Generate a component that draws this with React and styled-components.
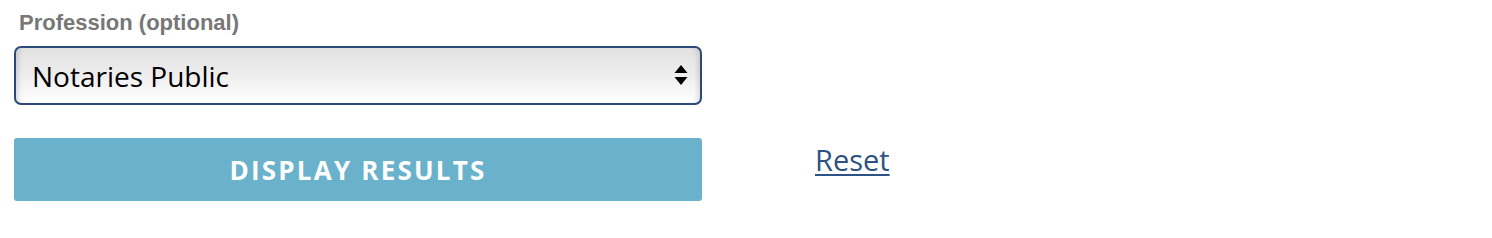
import React from "react";
import styled, { createGlobalStyle } from "styled-components";

const GlobalStyle = createGlobalStyle`
  body {
    margin: 0;
    background: #ffffff;
    font-family: "Open Sans", "Liberation Sans", sans-serif;
  }
`;

const Form = styled.form`
  display: flex;
  flex-direction: column;
  padding: 10px 0 0 14px;
`;

const Label = styled.label`
  font-family: "Liberation Sans", Arial, sans-serif;
  font-weight: 700;
  font-size: 22px;
  line-height: 26px;
  color: #777777;
  padding-left: 5px;
  margin-bottom: 10px;
`;

const Select = styled.div`
  box-sizing: border-box;
  width: 688px;
  height: 59px;
  border: 2px solid #2b4a79;
  border-radius: 7px;
  background: linear-gradient(to bottom, #e2e2e2 0%, #ececec 45%, #ffffff 100%);
  box-shadow: inset 6px 0 6px -5px rgba(0, 0, 0, 0.18),
    inset -6px 0 6px -5px rgba(0, 0, 0, 0.18);
  display: flex;
  align-items: center;
  justify-content: space-between;
  padding: 0 12px 0 16px;
  font-size: 28px;
  color: #000000;
`;

const Arrows = styled.svg`
  width: 14px;
  height: 22px;
`;

const Actions = styled.div`
  display: flex;
  align-items: flex-start;
  margin-top: 33px;
`;

const Button = styled.button`
  width: 688px;
  height: 63px;
  border: none;
  border-radius: 3px;
  background: #6ab1cc;
  color: #ffffff;
  font-family: "Open Sans", sans-serif;
  font-weight: 700;
  font-size: 26px;
  letter-spacing: 2.2px;
  text-transform: uppercase;
  cursor: pointer;
`;

const Reset = styled.a`
  margin: 2px 0 0 113px;
  font-size: 29px;
  color: #2d5283;
  text-decoration: underline;
  text-underline-offset: 3px;
  text-decoration-thickness: 2px;
`;

export default function App() {
  return (
    <>
      <GlobalStyle />
      <Form>
        <Label>Profession (optional)</Label>
        <Select>
          <span>Notaries Public</span>
          <Arrows viewBox="0 0 14 22">
            <polygon points="7,0 13.5,8 0.5,8" fill="#000" />
            <polygon points="0.5,12 13.5,12 7,20" fill="#000" />
          </Arrows>
        </Select>
        <Actions>
          <Button type="button">Display Results</Button>
          <Reset href="#">Reset</Reset>
        </Actions>
      </Form>
    </>
  );
}
